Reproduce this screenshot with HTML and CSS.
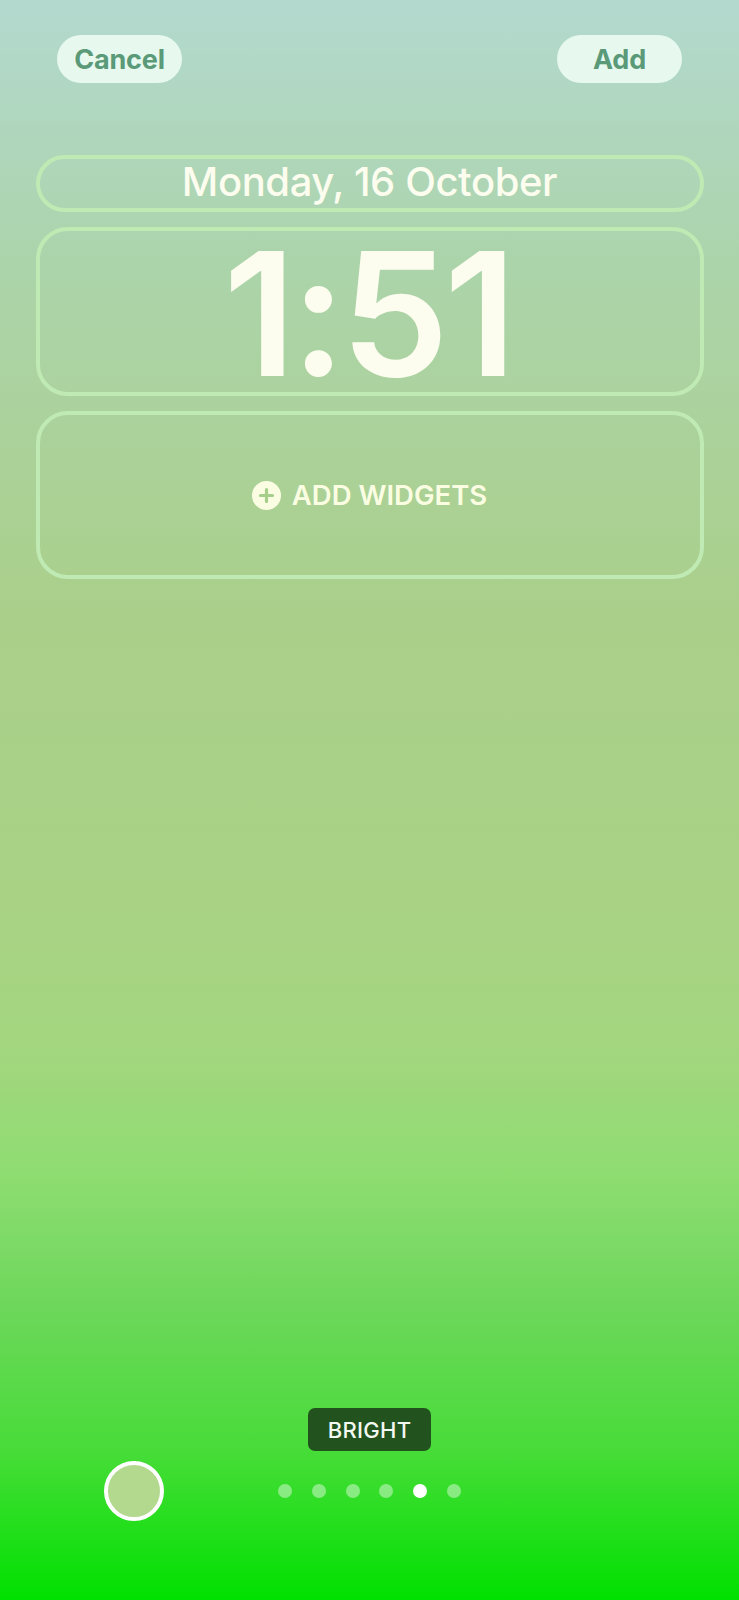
FILE: index.html
```html
<!DOCTYPE html>
<html lang="en">
<head>
  <meta charset="UTF-8">
  <meta name="viewport" content="width=device-width, initial-scale=1.0">
  <title>Lock Screen</title>
  <link rel="stylesheet" href="styles.css">
</head>
<body>
  <div class="screen">
    <div class="topbar">
      <button class="pill">Cancel</button>
      <button class="pill">Add</button>
    </div>

    <div class="slot date">Monday, 16 October</div>
    <div class="slot time">1:51</div>
    <div class="slot widgets">
      <svg class="plus" width="29" height="29" viewBox="0 0 29 29">
        <circle cx="14.5" cy="14.5" r="14.5" fill="#fbfde2"/>
        <path d="M14.5 8.5v12M8.5 14.5h12" stroke="#a6cf8b" stroke-width="3.2" stroke-linecap="round"/>
      </svg>
      <span>ADD WIDGETS</span>
    </div>

    <div class="spacer"></div>

    <div class="bottom">
      <div class="badge">BRIGHT</div>
      <div class="picker">
        <div class="swatch"></div>
        <div class="dots">
          <span class="dot"></span>
          <span class="dot"></span>
          <span class="dot"></span>
          <span class="dot"></span>
          <span class="dot active"></span>
          <span class="dot"></span>
        </div>
        <div></div>
      </div>
    </div>
  </div>
</body>
</html>
```

FILE: styles.css
```css
body {
  margin: 0;
  font-family: Inter, "Noto Sans", sans-serif;
  overflow: hidden;
}

.screen {
  width: 739px;
  height: 1600px;
  display: flex;
  flex-direction: column;
  align-items: center;
  background: linear-gradient(180deg,
    #b3d9cf 0px,
    #acd4ab 260px,
    #aacf8a 620px,
    #a9d285 900px,
    #a2d67e 1060px,
    #8fdd72 1170px,
    #6cd75a 1310px,
    #48dc39 1450px,
    #00e100 1600px);
}

.topbar {
  width: 100%;
  box-sizing: border-box;
  padding: 35px 57px 0;
  display: flex;
  justify-content: space-between;
}

.pill {
  width: 125px;
  height: 48px;
  border: none;
  border-radius: 24px;
  background: #e7f8ef;
  color: #5a9a78;
  font-family: Inter, "Noto Sans", sans-serif;
  font-size: 27px;
  font-weight: 700;
  letter-spacing: -0.2px;
  padding: 0;
}

.slot {
  width: 668px;
  box-sizing: border-box;
  border: 4px solid #bfeab3;
  color: #fcfdee;
  display: flex;
  justify-content: center;
  align-items: center;
}

.date {
  margin-top: 72px;
  height: 57px;
  border-radius: 29px;
  font-size: 40px;
  font-weight: 500;
  letter-spacing: -0.4px;
  line-height: 1;
  padding-bottom: 3px;
}

.time {
  margin-top: 15px;
  height: 169px;
  border-radius: 32px;
  font-size: 172px;
  font-weight: 600;
  letter-spacing: -5px;
  line-height: 0.85;
  padding: 3px 4px 0 0;
}

.widgets {
  margin-top: 15px;
  height: 168px;
  border-radius: 32px;
  gap: 11px;
  color: #fbfde2;
  font-size: 27.5px;
  font-weight: 600;
}

.spacer {
  flex: 1;
}

.bottom {
  width: 100%;
  display: flex;
  flex-direction: column;
  align-items: center;
  padding-bottom: 79px;
}

.badge {
  background: #22531f;
  color: #f4f8f2;
  font-size: 22px;
  font-weight: 500;
  letter-spacing: 0.3px;
  height: 43px;
  width: 123px;
  border-radius: 7px;
  display: flex;
  align-items: center;
  justify-content: center;
}

.picker {
  margin-top: 10px;
  width: 100%;
  display: grid;
  grid-template-columns: 1fr auto 1fr;
  align-items: center;
}

.swatch {
  justify-self: start;
  margin-left: 104px;
  width: 60px;
  height: 60px;
  box-sizing: border-box;
  border: 4px solid #ffffff;
  border-radius: 50%;
  background: #b3d98f;
}

.dots {
  display: flex;
  gap: 19.7px;
}

.dot {
  width: 14px;
  height: 14px;
  border-radius: 50%;
  background: rgba(255, 255, 255, 0.42);
}

.dot.active {
  background: #ffffff;
}
```
